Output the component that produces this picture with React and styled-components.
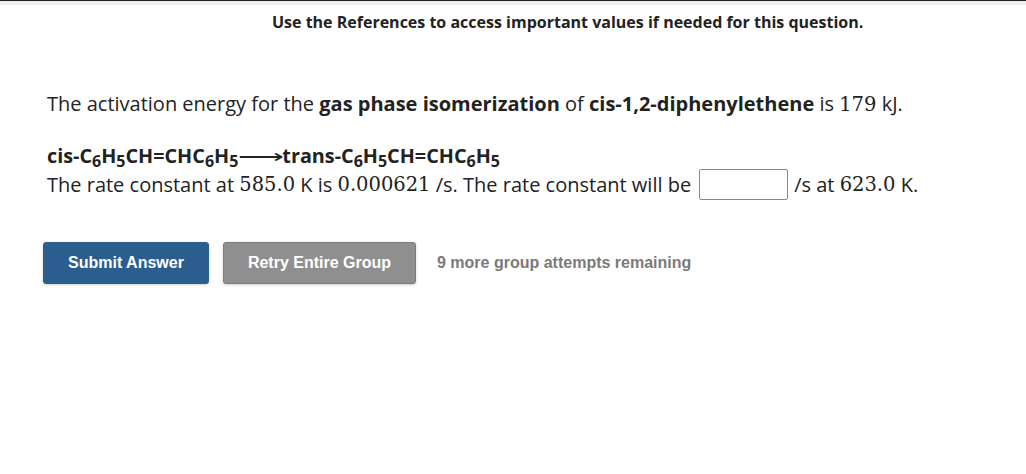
import React from 'react'
import styled, { createGlobalStyle } from 'styled-components'

const Global = createGlobalStyle`
  body{
    margin:0;
    background:#fff;
    font-family:"Open Sans", "Noto Sans", sans-serif;
    color:#222;
  }
`

const Page = styled.div`
  border-top:1px solid #222;
  min-height:473px;
  box-sizing:border-box;
`

const TopBand = styled.div`
  height:4px;
  background:#efefef;
`

const Notice = styled.div`
  padding:6px 0 0 272px;
  font-size:16px;
  font-weight:bold;
  height:30px;
`

const Question = styled.div`
  padding:51px 0 0 47px;
  font-size:20px;
  line-height:24px;
`

const Intro = styled.p`
  margin:0 0 29px;
`

const Equation = styled.div`
  font-weight:bold;
  font-size:19.8px;
  line-height:20px;
  height:22px;
`

const Sub = styled.sub`
  font-size:16px;
  line-height:1;
  vertical-align:-4px;
`

const Arrow = styled.span`
  display:inline-block;
  font-weight:normal;
  transform:scaleX(1.6);
  margin:0 6px 0 9px;
`

const Num = styled.span`
  font-family:"DejaVu Serif", "Liberation Serif", serif;
  font-size:19.5px;
`

const RateRow = styled.div`
  display:flex;
  align-items:center;
  white-space:pre;
  margin-top:1px;
`

const AnswerBox = styled.input`
  width:89px;
  height:31px;
  box-sizing:border-box;
  border:1px solid #888;
  border-radius:2px;
  margin:0 6px 0 8px;
  padding:0;
`

const Actions = styled.div`
  display:flex;
  align-items:center;
  gap:14px;
  padding:42px 0 0 43px;
  font-family:"Liberation Sans", Arial, sans-serif;
`

const Button = styled.button`
  height:42px;
  padding:0 ${p => p.$pad}px;
  border-radius:3px;
  border:1px solid ${p => p.$border};
  background:${p => p.$bg};
  color:#fff;
  font-family:"Liberation Sans", Arial, sans-serif;
  font-weight:bold;
  font-size:16px;
  box-shadow:0 1px 3px rgba(0,0,0,.2);
`

const Remaining = styled.span`
  margin-left:7px;
  color:#7a7a7a;
  font-weight:bold;
  font-size:16px;
`

export default function App(){
  return (
    <Page>
      <Global/>
      <TopBand/>
      <Notice>Use the References to access important values if needed for this question.</Notice>
      <Question>
        <Intro>
          The activation energy for the <b>gas phase isomerization</b> of <b>cis-1,2-diphenylethene</b> is <Num>179</Num> kJ.
        </Intro>
        <Equation>
          cis-C<Sub>6</Sub>H<Sub>5</Sub>CH=CHC<Sub>6</Sub>H<Sub>5</Sub><Arrow>⟶</Arrow>trans-C<Sub>6</Sub>H<Sub>5</Sub>CH=CHC<Sub>6</Sub>H<Sub>5</Sub>
        </Equation>
        <RateRow>
          The rate constant at <Num>585.0</Num> K is <Num>0.000621</Num> /s. The rate constant will be<AnswerBox/>/s at <Num>623.0</Num> K.
        </RateRow>
      </Question>
      <Actions>
        <Button $bg="#2b5d8f" $border="#2b5d8f" $pad={24}>Submit Answer</Button>
        <Button $bg="#8f8f8f" $border="#7d7d7d" $pad={24}>Retry Entire Group</Button>
        <Remaining>9 more group attempts remaining</Remaining>
      </Actions>
    </Page>
  )
}
